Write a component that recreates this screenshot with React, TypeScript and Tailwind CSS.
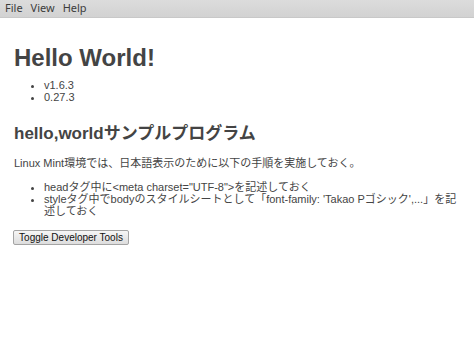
export default function App() {
  return (
    <div className="w-[474px] h-[355px] bg-white text-[#444] font-['Liberation_Sans','Noto_Sans_CJK_JP',sans-serif] overflow-hidden">
      <div className="h-[18px] bg-gradient-to-b from-[#dcdcdc] to-[#d2d2d2] border-b border-[#c8c8c8] flex items-center gap-[8px] px-[5px] text-[11px] text-[#3c3c3c] font-['Noto_Sans',sans-serif]">
        <span>File</span>
        <span>View</span>
        <span>Help</span>
      </div>
      <div className="px-[14px] pt-[25px]">
        <h1 className="text-[24px] leading-[30px] font-semibold">Hello World!</h1>
        <ul className="list-disc pl-[30px] mt-[6px] text-[11px] leading-[12px]">
          <li>v1.6.3</li>
          <li>0.27.3</li>
        </ul>
        <h2 className="text-[17px] leading-[22px] mt-[20px] font-semibold">hello,worldサンプルプログラム</h2>
        <p className="text-[11px] leading-[14px] mt-[11px]">Linux Mint環境では、日本語表示のために以下の手順を実施しておく。</p>
        <ul className="list-disc pl-[30px] mt-[11px] text-[11px] leading-[12px]">
          <li>headタグ中に&lt;meta charset="UTF-8"&gt;を記述しておく</li>
          <li>styleタグ中でbodyのスタイルシートとして「font-family: 'Takao Pゴシック',...」を記述しておく</li>
        </ul>
        <button className="block mt-[13px] ml-[-1px] w-[116px] h-[15px] text-[10px] leading-[13px] text-[#111] bg-gradient-to-b from-[#f6f6f6] to-[#dddddd] border border-[#a4a4a4] rounded-[2px]">
          Toggle Developer Tools
        </button>
      </div>
    </div>
  );
}
